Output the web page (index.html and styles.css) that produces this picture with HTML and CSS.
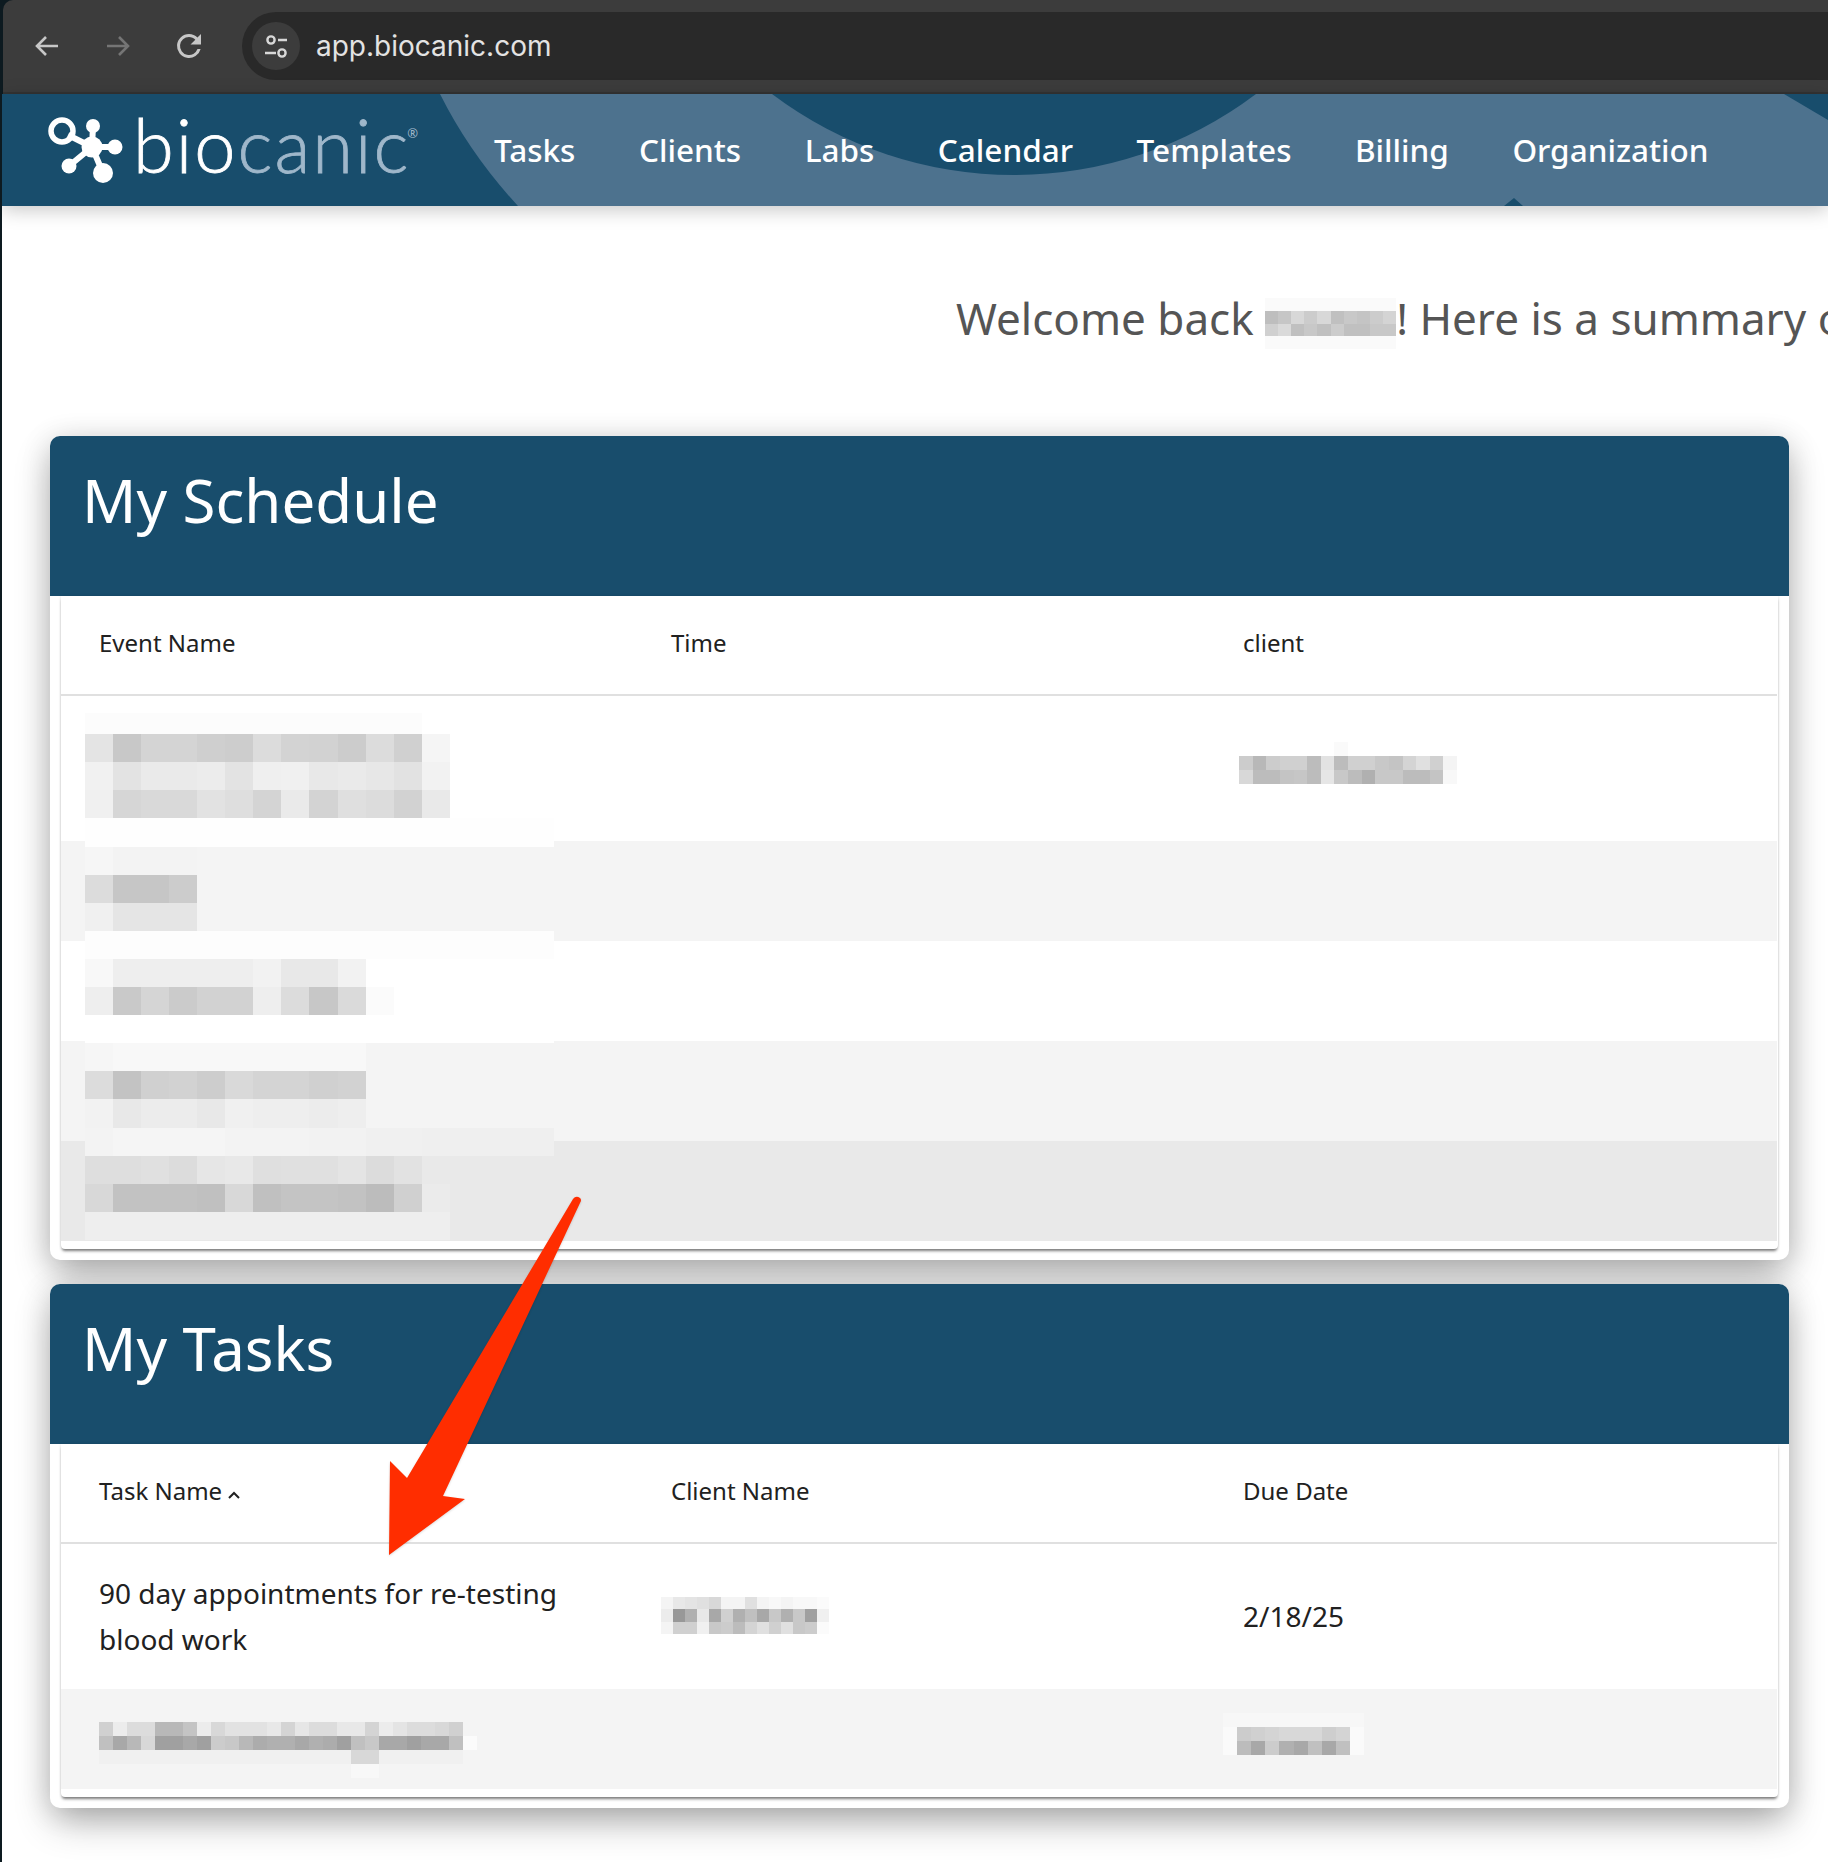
FILE: index.html
```html
<!DOCTYPE html>
<html lang="en">
<head>
<meta charset="utf-8">
<title>Biocanic</title>
<link rel="stylesheet" href="styles.css">
</head>
<body>
<div class="chrome-frame">
<div class="toolbar">
  <div class="nav-buttons">
    <svg class="tool-icon" viewBox="0 0 24 24"><path d="M23 12H2M11 3l-9 9 9 9"/></svg>
    <svg class="tool-icon tool-icon-off" viewBox="0 0 24 24"><path d="M1 12h21M13 3l9 9-9 9"/></svg>
    <svg class="tool-icon tool-icon-fill" viewBox="0 0 24 24"><path d="M17.65 6.35A7.96 7.96 0 0 0 12 4a8 8 0 1 0 7.75 10h-2.08A6 6 0 1 1 12 6c1.66 0 3.14.69 4.22 1.78L13 11h7V4l-2.35 2.35z"/></svg>
  </div>
  <div class="omnibox">
    <span class="site-btn">
      <svg class="tune" viewBox="0 0 24 24"><circle cx="7" cy="6" r="3.6"/><path d="M14 6h9M1 19h11"/><circle cx="18" cy="19" r="3.6"/></svg>
    </span>
    <span class="url">app.biocanic.com</span>
  </div>
</div>
</div>

<header class="app-header">
  <svg class="header-art" viewBox="0 0 1826 112" preserveAspectRatio="none">
    <path d="M0 0H438Q468 60 516 112H0Z"/>
    <path d="M770 0A402 402 0 0 0 1254 0Z"/>
    <path d="M1782 0L1826 26V0Z"/>
    <path d="M1502 112L1512 104L1521 112Z"/>
  </svg>
  <div class="logo">
    <svg class="logo-mark" viewBox="44 112 84 74">
      <g class="logo-bonds">
        <path d="M92 147L68 135M92 147L93 126M92 147H115M92 147L69 166M92 147L103 173"/>
      </g>
      <circle class="ring" cx="62" cy="131" r="11"/>
      <circle cx="93" cy="126" r="7"/>
      <circle cx="115" cy="147" r="7.5"/>
      <circle cx="69" cy="166" r="7.5"/>
      <circle cx="103" cy="173" r="10"/>
      <circle cx="92" cy="147" r="10.5"/>
    </svg>
    <span class="logo-text">bio<span class="logo-light">canic</span></span><span class="logo-reg">®</span>
  </div>
  <nav class="main-nav">
    <a>Tasks</a>
    <a>Clients</a>
    <a>Labs</a>
    <a>Calendar</a>
    <a>Templates</a>
    <a>Billing</a>
    <a>Organization</a>
  </nav>
</header>

<main class="content">
  <p class="welcome">Welcome back <span class="name-blur"><svg class="redact redact-name" viewBox="0 0 10 4" preserveAspectRatio="none">
    <rect class="bar-10" x="0" y="0" fill="#fafafa"/>
    <rect x="0" y="1" fill="#bebebe"/><rect x="1" y="1" fill="#c6c6c6"/><rect x="2" y="1" fill="#d8d8d8"/><rect x="3" y="1" fill="#cccccc"/><rect x="4" y="1" fill="#d8d8d8"/><rect x="5" y="1" fill="#c0c0c0"/><rect x="6" y="1" fill="#c8c8c8"/><rect x="7" y="1" fill="#c4c4c4"/><rect x="8" y="1" fill="#cccccc"/><rect x="9" y="1" fill="#d4d4d4"/>
    <rect x="0" y="2" fill="#d0d0d0"/><rect x="1" y="2" fill="#dadada"/><rect x="2" y="2" fill="#c0c0c0"/><rect x="3" y="2" fill="#c8c8c8"/><rect x="4" y="2" fill="#c0c0c0"/><rect x="5" y="2" fill="#cccccc"/><rect x="6" y="2" fill="#c0c0c0"/><rect x="7" y="2" fill="#c0c0c0"/><rect x="8" y="2" fill="#c8c8c8"/><rect x="9" y="2" fill="#c8c8c8"/>
    <rect class="bar-10" x="0" y="3" fill="#fafafa"/>
  </svg></span>! Here is a summary of your day</p>

  <section class="card">
    <h2 class="card-title">My Schedule</h2>
    <div class="table-wrap">
      <table class="data-table">
        <thead><tr><th>Event Name</th><th>Time</th><th>client</th></tr></thead>
        <tbody>
          <tr class="row-tall"><td></td><td></td><td></td></tr>
          <tr class="row-short"><td></td><td></td><td></td></tr>
          <tr class="row-short"><td></td><td></td><td></td></tr>
          <tr class="row-short"><td></td><td></td><td></td></tr>
          <tr class="row-short row-hover"><td></td><td></td><td></td></tr>
        </tbody>
      </table>
      <svg class="redact redact-events" viewBox="0 0 17 19" preserveAspectRatio="none">
        <rect class="bar-12" x="0" y="0.25" fill="#fcfcfc"/>
        <rect x="0" y="1" fill="#e4e4e4"/><rect x="1" y="1" fill="#c8c8c8"/><rect x="2" y="1" fill="#d4d4d4"/><rect x="3" y="1" fill="#d4d4d4"/><rect x="4" y="1" fill="#cfcfcf"/><rect x="5" y="1" fill="#cdcdcd"/><rect x="6" y="1" fill="#dcdcdc"/><rect x="7" y="1" fill="#d3d3d3"/><rect x="8" y="1" fill="#d2d2d2"/><rect x="9" y="1" fill="#cccccc"/><rect x="10" y="1" fill="#dcdcdc"/><rect x="11" y="1" fill="#d0d0d0"/><rect x="12" y="1" fill="#f5f5f5"/>
        <rect x="0" y="2" fill="#f1f1f1"/><rect x="1" y="2" fill="#e3e3e3"/><rect x="2" y="2" fill="#eaeaea"/><rect x="3" y="2" fill="#eaeaea"/><rect x="4" y="2" fill="#ececec"/><rect x="5" y="2" fill="#e3e3e3"/><rect x="6" y="2" fill="#efefef"/><rect x="7" y="2" fill="#f0f0f0"/><rect x="8" y="2" fill="#e8e8e8"/><rect x="9" y="2" fill="#eaeaea"/><rect x="10" y="2" fill="#e7e7e7"/><rect x="11" y="2" fill="#e2e2e2"/><rect x="12" y="2" fill="#f2f2f2"/>
        <rect x="0" y="3" fill="#f0f0f0"/><rect x="1" y="3" fill="#d6d6d6"/><rect x="2" y="3" fill="#d9d9d9"/><rect x="3" y="3" fill="#d9d9d9"/><rect x="4" y="3" fill="#e2e2e2"/><rect x="5" y="3" fill="#dedede"/><rect x="6" y="3" fill="#d4d4d4"/><rect x="7" y="3" fill="#eaeaea"/><rect x="8" y="3" fill="#d3d3d3"/><rect x="9" y="3" fill="#dfdfdf"/><rect x="10" y="3" fill="#dcdcdc"/><rect x="11" y="3" fill="#d2d2d2"/><rect x="12" y="3" fill="#e9e9e9"/>
        <rect class="bar-17" x="0" y="4" fill="#fefefe"/>
        <rect x="0" y="5" fill="#f6f6f6"/><rect x="1" y="5" fill="#f3f3f3"/><rect x="2" y="5" fill="#f3f3f3"/><rect x="3" y="5" fill="#f3f3f3"/>
        <rect x="0" y="6" fill="#dcdcdc"/><rect x="1" y="6" fill="#c6c6c6"/><rect x="2" y="6" fill="#c6c6c6"/><rect x="3" y="6" fill="#cccccc"/>
        <rect x="0" y="7" fill="#f0f0f0"/><rect x="1" y="7" fill="#e5e5e5"/><rect x="2" y="7" fill="#e5e5e5"/><rect x="3" y="7" fill="#e5e5e5"/>
        <rect class="bar-17" x="0" y="8" fill="#fdfdfd"/>
        <rect x="0" y="9" fill="#f8f8f8"/><rect x="1" y="9" fill="#eeeeee"/><rect x="2" y="9" fill="#eeeeee"/><rect x="3" y="9" fill="#eeeeee"/><rect x="4" y="9" fill="#eeeeee"/><rect x="5" y="9" fill="#eeeeee"/><rect x="6" y="9" fill="#f2f2f2"/><rect x="7" y="9" fill="#e8e8e8"/><rect x="8" y="9" fill="#e8e8e8"/><rect x="9" y="9" fill="#f2f2f2"/>
        <rect x="0" y="10" fill="#eeeeee"/><rect x="1" y="10" fill="#c9c9c9"/><rect x="2" y="10" fill="#d5d5d5"/><rect x="3" y="10" fill="#cbcbcb"/><rect x="4" y="10" fill="#d2d2d2"/><rect x="5" y="10" fill="#d2d2d2"/><rect x="6" y="10" fill="#eeeeee"/><rect x="7" y="10" fill="#dcdcdc"/><rect x="8" y="10" fill="#c7c7c7"/><rect x="9" y="10" fill="#dadada"/><rect x="10" y="10" fill="#fbfbfb"/>
        <rect class="bar-17" x="0" y="11" fill="#ffffff"/>
        <rect x="0" y="12" fill="#f6f6f6"/><rect x="1" y="12" fill="#f8f8f8"/><rect x="2" y="12" fill="#f8f8f8"/><rect x="3" y="12" fill="#f8f8f8"/><rect x="4" y="12" fill="#f8f8f8"/><rect x="5" y="12" fill="#f8f8f8"/><rect x="6" y="12" fill="#f8f8f8"/><rect x="7" y="12" fill="#f8f8f8"/><rect x="8" y="12" fill="#f8f8f8"/><rect x="9" y="12" fill="#f8f8f8"/>
        <rect x="0" y="13" fill="#dcdcdc"/><rect x="1" y="13" fill="#c3c3c3"/><rect x="2" y="13" fill="#d0d0d0"/><rect x="3" y="13" fill="#d2d2d2"/><rect x="4" y="13" fill="#cdcdcd"/><rect x="5" y="13" fill="#d9d9d9"/><rect x="6" y="13" fill="#d4d4d4"/><rect x="7" y="13" fill="#d4d4d4"/><rect x="8" y="13" fill="#d0d0d0"/><rect x="9" y="13" fill="#d2d2d2"/>
        <rect x="0" y="14" fill="#f2f2f2"/><rect x="1" y="14" fill="#e8e8e8"/><rect x="2" y="14" fill="#ececec"/><rect x="3" y="14" fill="#ececec"/><rect x="4" y="14" fill="#e8e8e8"/><rect x="5" y="14" fill="#f0f0f0"/><rect x="6" y="14" fill="#eeeeee"/><rect x="7" y="14" fill="#eeeeee"/><rect x="8" y="14" fill="#ececec"/><rect x="9" y="14" fill="#eeeeee"/>
        <rect x="0" y="15" fill="#f3f3f3"/><rect x="1" y="15" fill="#f5f5f5"/><rect x="2" y="15" fill="#f5f5f5"/><rect x="3" y="15" fill="#f5f5f5"/><rect x="4" y="15" fill="#f5f5f5"/><rect x="5" y="15" fill="#f3f3f3"/><rect x="6" y="15" fill="#f3f3f3"/><rect x="7" y="15" fill="#f3f3f3"/><rect x="8" y="15" fill="#f2f2f2"/><rect x="9" y="15" fill="#f2f2f2"/><rect x="10" y="15" fill="#f0f0f0"/><rect x="11" y="15" fill="#f0f0f0"/><rect x="12" y="15" fill="#efefef"/><rect x="13" y="15" fill="#efefef"/><rect x="14" y="15" fill="#efefef"/><rect x="15" y="15" fill="#efefef"/><rect class="bar-tail" x="16" y="15" fill="#efefef"/>
        <rect x="0" y="16" fill="#dedede"/><rect x="1" y="16" fill="#dedede"/><rect x="2" y="16" fill="#e0e0e0"/><rect x="3" y="16" fill="#dcdcdc"/><rect x="4" y="16" fill="#e6e6e6"/><rect x="5" y="16" fill="#e8e8e8"/><rect x="6" y="16" fill="#dfdfdf"/><rect x="7" y="16" fill="#e0e0e0"/><rect x="8" y="16" fill="#e0e0e0"/><rect x="9" y="16" fill="#e4e4e4"/><rect x="10" y="16" fill="#dcdcdc"/><rect x="11" y="16" fill="#e2e2e2"/>
        <rect x="0" y="17" fill="#d8d8d8"/><rect x="1" y="17" fill="#c2c2c2"/><rect x="2" y="17" fill="#c2c2c2"/><rect x="3" y="17" fill="#c2c2c2"/><rect x="4" y="17" fill="#c0c0c0"/><rect x="5" y="17" fill="#d8d8d8"/><rect x="6" y="17" fill="#c0c0c0"/><rect x="7" y="17" fill="#c4c4c4"/><rect x="8" y="17" fill="#c4c4c4"/><rect x="9" y="17" fill="#c2c2c2"/><rect x="10" y="17" fill="#bcbcbc"/><rect x="11" y="17" fill="#d0d0d0"/><rect x="12" y="17" fill="#ebebeb"/>
        <rect class="bar-13" x="0" y="18" fill="#eeeeee"/>
      </svg>
      <svg class="redact redact-client" viewBox="0 0 16 3" preserveAspectRatio="none">
        <rect x="7" y="0" fill="#fafafa"/>
        <rect x="0" y="1" fill="#cccccc"/><rect x="1" y="1" fill="#b8b8b8"/><rect x="2" y="1" fill="#cccccc"/><rect x="3" y="1" fill="#d0d0d0"/><rect x="4" y="1" fill="#d0d0d0"/><rect x="5" y="1" fill="#bcbcbc"/><rect x="6" y="1" fill="#e2e2e2"/><rect x="7" y="1" fill="#bcbcbc"/><rect x="8" y="1" fill="#d0d0d0"/><rect x="9" y="1" fill="#d0d0d0"/><rect x="10" y="1" fill="#c8c8c8"/><rect x="11" y="1" fill="#c4c4c4"/><rect x="12" y="1" fill="#d4d4d4"/><rect x="13" y="1" fill="#e0e0e0"/><rect x="14" y="1" fill="#d0d0d0"/><rect x="15" y="1" fill="#f4f4f4"/>
        <rect x="0" y="2" fill="#d8d8d8"/><rect x="1" y="2" fill="#bcbcbc"/><rect x="2" y="2" fill="#bcbcbc"/><rect x="3" y="2" fill="#c4c4c4"/><rect x="4" y="2" fill="#c6c6c6"/><rect x="5" y="2" fill="#bcbcbc"/><rect x="6" y="2" fill="#e6e6e6"/><rect x="7" y="2" fill="#c8c8c8"/><rect x="8" y="2" fill="#bcbcbc"/><rect x="9" y="2" fill="#b0b0b0"/><rect x="10" y="2" fill="#c8c8c8"/><rect x="11" y="2" fill="#c8c8c8"/><rect x="12" y="2" fill="#bcbcbc"/><rect x="13" y="2" fill="#bcbcbc"/><rect x="14" y="2" fill="#c4c4c4"/><rect x="15" y="2" fill="#f8f8f8"/>
      </svg>
    </div>
  </section>

  <section class="card">
    <h2 class="card-title">My Tasks</h2>
    <div class="table-wrap">
      <table class="data-table">
        <thead><tr><th>Task Name<svg class="sort-caret" viewBox="0 0 14 10"><path d="M2 8l5-5 5 5"/></svg></th><th>Client Name</th><th>Due Date</th></tr></thead>
        <tbody>
          <tr class="row-tall"><td class="task-name">90 day appointments for re-testing blood work</td><td></td><td>2/18/25</td></tr>
          <tr class="row-short"><td></td><td></td><td></td></tr>
        </tbody>
      </table>
      <svg class="redact redact-task-client" viewBox="0 0 14 3" preserveAspectRatio="none">
        <rect x="0" y="0" fill="#f4f4f4"/><rect x="1" y="0" fill="#e8e8e8"/><rect x="2" y="0" fill="#e4e4e4"/><rect x="3" y="0" fill="#e0e0e0"/><rect x="4" y="0" fill="#d8d8d8"/><rect x="5" y="0" fill="#f4f4f4"/><rect x="6" y="0" fill="#f4f4f4"/><rect x="7" y="0" fill="#e0e0e0"/><rect x="8" y="0" fill="#f4f4f4"/><rect x="9" y="0" fill="#f8f8f8"/><rect x="10" y="0" fill="#f4f4f4"/><rect x="11" y="0" fill="#f8f8f8"/><rect x="12" y="0" fill="#f8f8f8"/><rect x="13" y="0" fill="#fbfbfb"/>
        <rect x="0" y="1" fill="#ececec"/><rect x="1" y="1" fill="#989898"/><rect x="2" y="1" fill="#b0b0b0"/><rect x="3" y="1" fill="#e8e8e8"/><rect x="4" y="1" fill="#a8a8a8"/><rect x="5" y="1" fill="#d0d0d0"/><rect x="6" y="1" fill="#b0b0b0"/><rect x="7" y="1" fill="#c0c0c0"/><rect x="8" y="1" fill="#a8a8a8"/><rect x="9" y="1" fill="#c8c8c8"/><rect x="10" y="1" fill="#b0b0b0"/><rect x="11" y="1" fill="#c8c8c8"/><rect x="12" y="1" fill="#a0a0a0"/><rect x="13" y="1" fill="#f0f0f0"/>
        <rect x="0" y="2" fill="#f4f4f4"/><rect x="1" y="2" fill="#d0d0d0"/><rect x="2" y="2" fill="#d0d0d0"/><rect x="3" y="2" fill="#f0f0f0"/><rect x="4" y="2" fill="#c8c8c8"/><rect x="5" y="2" fill="#cccccc"/><rect x="6" y="2" fill="#bcbcbc"/><rect x="7" y="2" fill="#d4d4d4"/><rect x="8" y="2" fill="#e0e0e0"/><rect x="9" y="2" fill="#d0d0d0"/><rect x="10" y="2" fill="#e0e0e0"/><rect x="11" y="2" fill="#c8c8c8"/><rect x="12" y="2" fill="#cccccc"/><rect x="13" y="2" fill="#fbfbfb"/>
      </svg>
      <svg class="redact redact-task-name" viewBox="0 0 27 4" preserveAspectRatio="none">
        <rect x="0" y="0" fill="#d0d0d0"/><rect x="1" y="0" fill="#ececec"/><rect x="2" y="0" fill="#dcdcdc"/><rect x="3" y="0" fill="#dcdcdc"/><rect x="4" y="0" fill="#b8b8b8"/><rect x="5" y="0" fill="#b8b8b8"/><rect x="6" y="0" fill="#c4c4c4"/><rect x="7" y="0" fill="#ececec"/><rect x="8" y="0" fill="#d8d8d8"/><rect x="9" y="0" fill="#e2e2e2"/><rect x="10" y="0" fill="#e2e2e2"/><rect x="11" y="0" fill="#e2e2e2"/><rect x="12" y="0" fill="#e8e8e8"/><rect x="13" y="0" fill="#d4d4d4"/><rect x="14" y="0" fill="#e6e6e6"/><rect x="15" y="0" fill="#dcdcdc"/><rect x="16" y="0" fill="#dcdcdc"/><rect x="17" y="0" fill="#e8e8e8"/><rect x="18" y="0" fill="#e8e8e8"/><rect x="19" y="0" fill="#d4d4d4"/><rect x="20" y="0" fill="#ececec"/><rect x="21" y="0" fill="#e4e4e4"/><rect x="22" y="0" fill="#dcdcdc"/><rect x="23" y="0" fill="#dcdcdc"/><rect x="24" y="0" fill="#d8d8d8"/><rect x="25" y="0" fill="#d0d0d0"/>
        <rect x="0" y="1" fill="#c0c0c0"/><rect x="1" y="1" fill="#a8a8a8"/><rect x="2" y="1" fill="#b8b8b8"/><rect x="3" y="1" fill="#d8d8d8"/><rect x="4" y="1" fill="#a0a0a0"/><rect x="5" y="1" fill="#a0a0a0"/><rect x="6" y="1" fill="#a8a8a8"/><rect x="7" y="1" fill="#a0a0a0"/><rect x="8" y="1" fill="#cccccc"/><rect x="9" y="1" fill="#c8c8c8"/><rect x="10" y="1" fill="#b8b8b8"/><rect x="11" y="1" fill="#acacac"/><rect x="12" y="1" fill="#b0b0b0"/><rect x="13" y="1" fill="#b0b0b0"/><rect x="14" y="1" fill="#a8a8a8"/><rect x="15" y="1" fill="#b0b0b0"/><rect x="16" y="1" fill="#acacac"/><rect x="17" y="1" fill="#a0a0a0"/><rect x="18" y="1" fill="#c0c0c0"/><rect x="19" y="1" fill="#c8c8c8"/><rect x="20" y="1" fill="#a8a8a8"/><rect x="21" y="1" fill="#a8a8a8"/><rect x="22" y="1" fill="#a0a0a0"/><rect x="23" y="1" fill="#a8a8a8"/><rect x="24" y="1" fill="#a8a8a8"/><rect x="25" y="1" fill="#c0c0c0"/><rect x="26" y="1" fill="#fbfbfb"/>
        <rect class="bar-26" x="0" y="2" fill="#f0f0f0"/><rect x="18" y="2" fill="#d8d8d8"/><rect x="19" y="2" fill="#d8d8d8"/>
        <rect x="18" y="3" fill="#f8f8f8"/><rect x="19" y="3" fill="#f8f8f8"/>
      </svg>
      <svg class="redact redact-task-date" viewBox="0 0 10 3" preserveAspectRatio="none">
        <rect class="bar-10" x="0" y="0" fill="#f7f7f7"/>
        <rect x="0" y="1" fill="#fafafa"/><rect x="1" y="1" fill="#cccccc"/><rect x="2" y="1" fill="#d0d0d0"/><rect x="3" y="1" fill="#d4d4d4"/><rect x="4" y="1" fill="#d8d8d8"/><rect x="5" y="1" fill="#d8d8d8"/><rect x="6" y="1" fill="#d8d8d8"/><rect x="7" y="1" fill="#cecece"/><rect x="8" y="1" fill="#d4d4d4"/><rect x="9" y="1" fill="#fafafa"/>
        <rect x="0" y="2" fill="#fafafa"/><rect x="1" y="2" fill="#bcbcbc"/><rect x="2" y="2" fill="#a8a8a8"/><rect x="3" y="2" fill="#cccccc"/><rect x="4" y="2" fill="#b0b0b0"/><rect x="5" y="2" fill="#a8a8a8"/><rect x="6" y="2" fill="#c0c0c0"/><rect x="7" y="2" fill="#a8a8a8"/><rect x="8" y="2" fill="#c0c0c0"/><rect x="9" y="2" fill="#fafafa"/>
      </svg>
    </div>
  </section>
</main>

<svg class="arrow" viewBox="380 1190 210 375">
  <path d="M573 1199Q576 1195 580 1198Q582 1200 580 1203L443 1496L465 1499L389 1555L390 1461L407 1478Z"/>
</svg>
</body>
</html>
```

FILE: styles.css
```css
* { box-sizing: border-box; }

html {
  margin: 0;
  overflow: hidden;
}

body {
  position: relative;
  width: 1828px;
  height: 1862px;
  margin: 0;
  overflow: hidden;
  background: #fff;
  border-left: 2px solid #0d1a20;
  font-family: "Noto Sans", "Open Sans", sans-serif;
  color: #212121;
}

/* browser toolbar */
.chrome-frame {
  padding-left: 1px;
  background: #0d1a20;
}

.toolbar {
  display: flex;
  height: 94px;
  padding-top: 12px;
  background: #3c3c3c;
  border-bottom: 2px solid #333;
  border-top-left-radius: 10px;
}

.nav-buttons {
  display: flex;
  align-items: center;
  gap: 47px;
  width: 239px;
  height: 68px;
  padding-left: 32px;
}

.tool-icon {
  flex: none;
  width: 24px;
  height: 24px;
  fill: none;
  stroke: #c7c7c7;
  stroke-width: 2.6;
}

.tool-icon-off { stroke: #757575; }

.tool-icon-fill {
  width: 36px;
  height: 36px;
  margin-left: -6px;
  fill: #c7c7c7;
  stroke: none;
}

.omnibox {
  flex: 1;
  display: flex;
  align-items: center;
  height: 68px;
  padding-left: 10px;
  background: #292929;
  border-radius: 34px 0 0 34px;
}

.site-btn {
  display: flex;
  align-items: center;
  justify-content: center;
  width: 48px;
  height: 48px;
  border-radius: 50%;
  background: #3c3c3c;
}

.tune {
  width: 24px;
  height: 24px;
  fill: none;
  stroke: #d8d8d8;
  stroke-width: 2.4;
}

.url {
  margin-left: 16px;
  font-family: Inter, Roboto, sans-serif;
  font-size: 28px;
  color: #e3e3e3;
}

/* app header */
.app-header {
  position: relative;
  z-index: 2;
  display: flex;
  align-items: center;
  height: 112px;
  background: #4d728e;
  box-shadow: 0 4px 18px rgba(0, 0, 0, 0.22);
}

.header-art {
  position: absolute;
  left: 0;
  top: 0;
  width: 100%;
  height: 100%;
  fill: #184d6c;
}

.logo {
  position: relative;
  display: flex;
  align-items: center;
  width: 492px;
  height: 100%;
  padding-left: 42px;
}

.logo-mark {
  flex: none;
  width: 84px;
  height: 74px;
  margin-bottom: 2px;
  fill: #fff;
}

.logo-bonds path {
  fill: none;
  stroke: #fff;
  stroke-width: 6;
}

.ring {
  fill: none;
  stroke: #fff;
  stroke-width: 5.5;
}

.logo-text {
  margin: 0 0 10px 5px;
  font-family: Lato, sans-serif;
  font-weight: 300;
  font-size: 74px;
  line-height: 1;
  letter-spacing: 2px;
  color: #fff;
  -webkit-text-stroke: 0.8px currentColor;
}

.logo-light { color: #9fb7ca; }

.logo-reg {
  align-self: flex-start;
  margin: 30px 0 0 -3px;
  font-size: 13px;
  color: #9fb7ca;
}

.main-nav {
  position: relative;
  display: flex;
  gap: 63.5px;
  margin-bottom: 2px;
  font-size: 31.5px;
  font-weight: 500;
  color: #fff;
}

/* page content */
.content {
  display: flex;
  flex-direction: column;
  gap: 24px;
  padding-left: 48px;
}

.welcome {
  height: 230px;
  margin: 0 0 -24px -48px;
  padding: 0 0 6px 954px;
  white-space: nowrap;
  overflow: hidden;
  font-size: 44px;
  line-height: 224px;
  color: #555;
}

.name-blur {
  position: relative;
  display: inline-block;
  width: 131px;
  height: 51px;
  vertical-align: middle;
}

.card {
  width: 1739px;
  padding-bottom: 11px;
  background: #fff;
  border-radius: 10px;
  box-shadow: 0 16px 38px -4px rgba(0, 0, 0, 0.3), 0 4px 30px rgba(0, 0, 0, 0.14);
}

.card-title {
  height: 160px;
  margin: 0;
  padding: 24px 0 0 32px;
  font-size: 60px;
  font-weight: 400;
  line-height: 80px;
  color: #fff;
  background: #184d6c;
  border-radius: 10px 10px 0 0;
}

.table-wrap {
  position: relative;
  margin: 0 11px;
  padding: 0 1px 8px 0;
  background: #fff;
  border-radius: 0 0 4px 4px;
  box-shadow: 0 3px 3px -1px rgba(0, 0, 0, 0.5), 0 0 3px rgba(0, 0, 0, 0.12);
}

.data-table {
  width: 100%;
  border-collapse: collapse;
  table-layout: fixed;
}

.data-table th {
  height: 99px;
  padding: 0 0 5px 38px;
  text-align: left;
  font-size: 24px;
  font-weight: 400;
  border-bottom: 2px solid #e0e0e0;
}

.data-table td {
  padding: 0 38px 2px;
  font-size: 28px;
  line-height: 46px;
}

.row-tall { height: 146px; }
.row-short { height: 100px; }

.data-table tbody tr:nth-child(even) { background: #f4f4f4; }
.data-table tbody tr.row-hover { background: #e9e9e9; }

.sort-caret {
  width: 14px;
  height: 10px;
  margin-left: 5px;
  fill: none;
  stroke: #212121;
  stroke-width: 2;
}

/* pixelated redactions */
.redact {
  position: absolute;
  shape-rendering: crispEdges;
}

.redact rect { width: 1px; height: 1px; }
.redact rect.bar-10 { width: 10px; }
.redact rect.bar-12 { width: 12px; }
.redact rect.bar-13 { width: 13px; }
.redact rect.bar-17 { width: 16.7px; }
.redact rect.bar-26 { width: 26px; }
.redact rect.bar-tail { width: 0.7px; }

.redact-name { left: 0; top: 0; width: 131px; height: 51px; }
.redact-events { left: 24px; top: 110px; width: 477px; height: 534px; }
.redact-client { left: 1178px; top: 146px; width: 218px; height: 42px; }
.redact-task-client { left: 600px; top: 153px; width: 168px; height: 37px; }
.redact-task-name { left: 38px; top: 278px; width: 378px; height: 56px; }
.redact-task-date { left: 1162px; top: 269px; width: 141px; height: 42px; }

.arrow {
  position: absolute;
  left: 378px;
  top: 1190px;
  width: 210px;
  height: 375px;
  fill: #ff2d00;
  filter: drop-shadow(0 1px 1px rgba(0, 0, 0, 0.15));
}
```
